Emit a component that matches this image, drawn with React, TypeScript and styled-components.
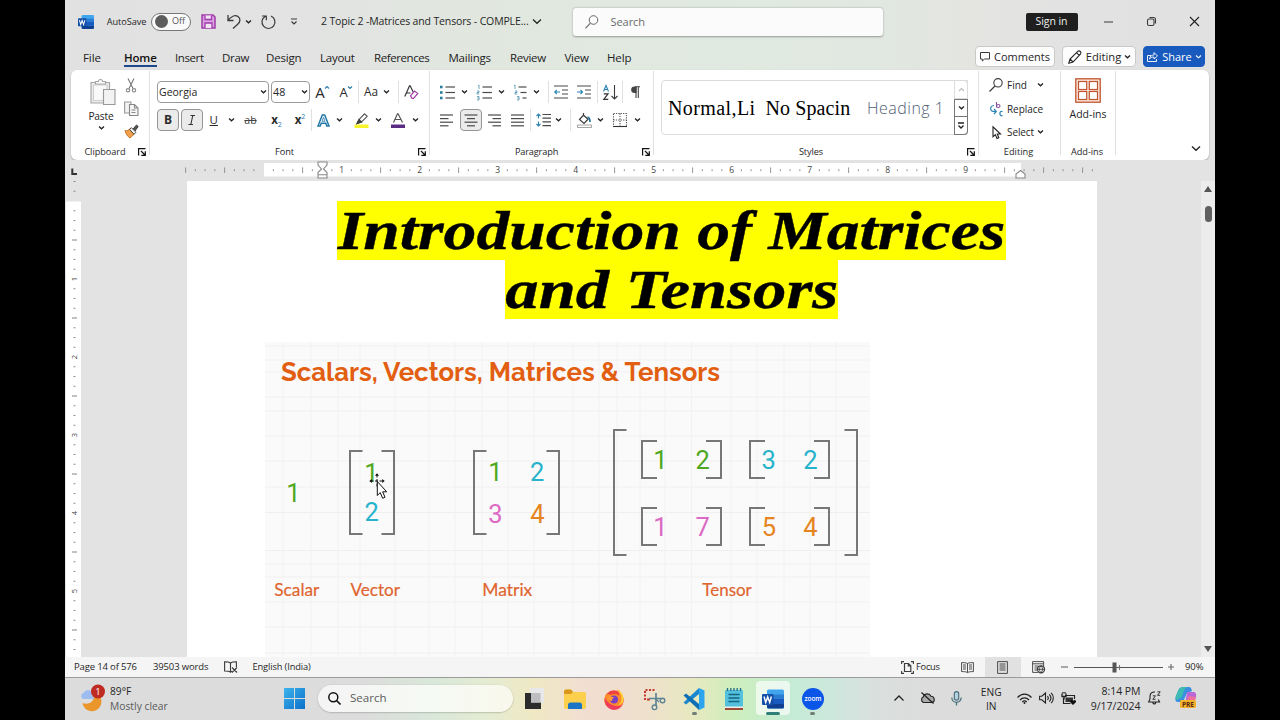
import React from "react";
import styled, { createGlobalStyle, css } from "styled-components";

const Global = createGlobalStyle`
  * { box-sizing: border-box; }
  body { margin: 0; background: #000; overflow: hidden; }
`;

/* ---------- shared parts ---------- */

const Screen = styled.div`
  width: 1280px;
  height: 720px;
  padding: 0 65px;
  background: #000;
  font-family: "Open Sans", "Noto Sans", sans-serif;
  color: #262626;
`;

const Desktop = styled.div`
  display: flex;
  flex-direction: column;
  width: 1150px;
  height: 720px;
  overflow: hidden;
  background: #e3e3e3;
`;

const Label = styled.span<{ $size?: number; $track?: number; $color?: string; $weight?: number }>`
  font-size: ${(p) => p.$size ?? 10}px;
  letter-spacing: ${(p) => p.$track ?? 0}px;
  color: ${(p) => p.$color ?? "#262626"};
  font-weight: ${(p) => p.$weight ?? 400};
  line-height: 1.2;
  white-space: nowrap;
`;

const Slot = styled.div<{ $w: number; $ml?: number }>`
  display: flex;
  flex: none;
  align-items: center;
  justify-content: center;
  width: ${(p) => p.$w}px;
  margin-left: ${(p) => p.$ml ?? 0}px;
`;

const Svg = styled.svg`
  display: block;
  flex: none;
  overflow: visible;
  fill: none;
  stroke: #3b3b3b;
  stroke-width: 1.1;
`;

const Glyph = ({ w, h, children }: { w: number; h: number; children: React.ReactNode }) => (
  <Svg width={w} height={h} viewBox={`0 0 ${w} ${h}`}>
    {children}
  </Svg>
);

const Chevron = ({ w = 5, color = "#222", weight = 1.3 }: { w?: number; color?: string; weight?: number }) => (
  <Svg width={w} height={w / 2 + 1} viewBox={`0 0 ${w} ${w / 2 + 1}`}>
    <path d={`M0 .5 L${w / 2} ${w / 2 + 0.3} L${w} .5`} stroke={color} strokeWidth={weight} />
  </Svg>
);

const Drop = ({ ml }: { ml: number }) => (
  <Slot $w={8} $ml={ml}>
    <Chevron />
  </Slot>
);

/* ---------- header ---------- */

const Header = styled.header`
  flex: none;
  height: 70px;
  background: linear-gradient(90deg, #e1e1e1 0, #e2e3e2 240px, #e1e7df 420px, #e0eae1 700px, #e1e6e1 840px, #e4e5e1 900px, #e2e2e2 1000px, #e1e1e1 100%);
`;

const TitleBar = styled.div`
  display: flex;
  align-items: center;
  height: 43px;
  padding-left: 13px;
`;

const Toggle = styled.div`
  display: flex;
  align-items: center;
  gap: 4px;
  width: 40px;
  height: 18px;
  margin-left: 4.5px;
  padding-left: 3px;
  border: 1px solid #777;
  border-radius: 9px;
  background: #fafafa;
`;

const Knob = styled.div`
  width: 13px;
  height: 13px;
  border-radius: 50%;
  background: #5d5d5d;
`;

const TitleText = styled.div`
  display: flex;
  align-items: center;
  width: 212px;
  margin-left: 22px;
`;

const SearchBox = styled.div`
  display: flex;
  align-items: center;
  gap: 12px;
  width: 310px;
  height: 28px;
  margin-left: 31.5px;
  padding-left: 12px;
  border-radius: 3px;
  background: #fafbfa;
  box-shadow: 0 0.5px 2px rgba(0, 0, 0, 0.35);
`;

const SignIn = styled.div`
  display: flex;
  align-items: center;
  justify-content: center;
  width: 52px;
  height: 18px;
  margin-left: 143px;
  border-radius: 2px;
  background: #1f1f1f;
`;

const TabBar = styled.nav`
  display: flex;
  align-items: flex-start;
  height: 27px;
  padding-left: 18px;
`;

const Tab = styled.div<{ $w: number }>`
  width: ${(p) => p.$w}px;
  padding-top: 8px;
  line-height: 0;
`;

const TabName = styled.span<{ $active?: boolean; $track: number }>`
  display: inline-block;
  height: 16px;
  font-size: 11.5px;
  line-height: 14px;
  letter-spacing: ${(p) => p.$track}px;
  color: #222;
  ${(p) => p.$active && css`
    height: 16px;
    font-weight: 600;
    color: #111;
    border-bottom: 2px solid #1c4a8c;
  `}
`;

const Actions = styled.div`
  display: flex;
  gap: 7px;
  margin: 3px 10px 0 auto;
`;

const Action = styled.div<{ $w: number; $primary?: boolean }>`
  display: flex;
  align-items: center;
  justify-content: center;
  gap: 4px;
  width: ${(p) => p.$w}px;
  height: 21px;
  border: 1px solid ${(p) => (p.$primary ? "#185abd" : "#c9c9c9")};
  border-radius: 4px;
  background: ${(p) => (p.$primary ? "#185abd" : "#fdfdfd")};
`;

const tabs: [string, number, number][] = [
  ["File", 41, -0.1], ["Home", 51, -0.15], ["Insert", 47, -0.4], ["Draw", 44, -0.3], ["Design", 54, -0.2],
  ["Layout", 54, -0.25], ["References", 74.5, -0.42], ["Mailings", 61.5, -0.25], ["Review", 54.5, -0.3],
  ["View", 42.5, -0.25], ["Help", 40, -0.15],
];

const WordLogo = ({ size }: { size: number }) => (
  <Svg width={size} height={size} viewBox="0 0 22 21" stroke="none">
    <g stroke="none">
      <rect x="5" y="1" width="17" height="19" rx="1.5" fill="#41a5ee" />
      <rect x="5" y="6" width="17" height="5" fill="#2b7cd3" />
      <rect x="5" y="10.5" width="17" height="5" fill="#185abd" />
      <path d="M5 15.5h17V18.5a1.5 1.5 0 0 1-1.5 1.5h-14A1.5 1.5 0 0 1 5 18.5Z" fill="#103f91" />
      <rect x="0" y="5.5" width="11.5" height="11" rx="1" fill="#1450a8" />
    </g>
    <path d="M2 8l1.7 6L5.7 8.4 7.7 14 9.4 8" stroke="#fff" strokeWidth="1.4" />
  </Svg>
);

const TopHeader = () => (
  <Header>
    <TitleBar>
      <Slot $w={15}><WordLogo size={16} /></Slot>
      <Slot $w={40} $ml={13.5}><Label $size={9.2} $track={-0.05}>AutoSave</Label></Slot>
      <Toggle><Knob /><Label $size={9} $color="#555">Off</Label></Toggle>
      <Slot $w={15} $ml={10}>
        <Glyph w={15} h={15}>
          <path d="M1 1h11l2 2v11H1Z" fill="#d9a3e0" stroke="#a03bab" strokeWidth="1.5" />
          <path d="M4 1.5v4h6.5v-4M4 14V9h7v5" fill="#f3e3f5" stroke="#a03bab" strokeWidth="1.3" />
        </Glyph>
      </Slot>
      <Slot $w={16} $ml={10}>
        <Glyph w={14} h={15}>
          <path d="M1 1v5.5h5.5M1 6.5C4 2.500 8 .5 11 2.500c3 2.200 2.200 5.500-.3 7.700L6 14.5" strokeWidth="1.3" />
        </Glyph>
      </Slot>
      <Drop ml={2} />
      <Slot $w={16} $ml={8}>
        <Glyph w={15} h={15}>
          <path d="M10 2a6.5 6.5 0 1 1-5.5.2M1 2h4.3v4.3" strokeWidth="1.2" />
        </Glyph>
      </Slot>
      <Slot $w={10} $ml={13}>
        <Glyph w={6} h={7}><path d="M0 1h6M.5 3.5L3 6l2.500-2.500" strokeWidth="1.2" /></Glyph>
      </Slot>
      <TitleText><Label $size={10.5} $track={-0.14}>2 Topic 2 -Matrices and Tensors - COMPLE...</Label></TitleText>
      <Chevron w={8} weight={1.2} />
      <SearchBox>
        <Glyph w={14} h={14}>
          <circle cx="8.5" cy="5" r="4.3" stroke="#666" strokeWidth="1" />
          <path d="M5.4 8.2L.5 13.3" stroke="#666" strokeWidth="1.1" />
        </Glyph>
        <Label $size={11} $track={-0.05} $color="#6b6b6b">Search</Label>
      </SearchBox>
      <SignIn><Label $size={10.5} $track={-0.05} $color="#eee">Sign in</Label></SignIn>
      <Slot $w={10} $ml={25.5}><Glyph w={9} h={2}><path d="M0 1h9" strokeWidth="1" /></Glyph></Slot>
      <Slot $w={10} $ml={33}>
        <Glyph w={9} h={9}>
          <rect x=".5" y="2" width="6.5" height="6.5" rx="1.5" />
          <path d="M2.5 .5h4a2 2 0 0 1 2 2v4" />
        </Glyph>
      </Slot>
      <Slot $w={10} $ml={33}><Glyph w={9} h={9}><path d="M0 0l9 9M9 0L0 9" stroke="#222" /></Glyph></Slot>
    </TitleBar>
    <TabBar>
      {tabs.map(([name, w, track]) => (
        <Tab key={name} $w={w}><TabName $active={name === "Home"} $track={track}>{name}</TabName></Tab>
      ))}
      <Actions>
        <Action $w={80}>
          <Glyph w={10} h={9}><path d="M.5 .5h9v6.5H4.5L2.3 9V7H.5Z" strokeWidth="1" /></Glyph>
          <Label $size={11} $track={-0.02}>Comments</Label>
        </Action>
        <Action $w={74}>
          <Glyph w={14} h={14}><path d="M.8 13.2L2 9 10 1.2c1.600-1 3.700.9 2.600 2.600L5 12ZM8.5 2.700l2.700 2.700M2 9l3 3" stroke="#222" /></Glyph>
          <Label $size={11.2}>Editing</Label>
          <Chevron />
        </Action>
        <Action $w={62} $primary>
          <Glyph w={11} h={11}><path d="M4 4.500H.5V10.500H9.500V8M2.500 8C3 5 5 4 7 4V1.500L10.500 5 7 8V6C5 6 4 6.500 2.500 8Z" stroke="#fff" strokeWidth=".9" /></Glyph>
          <Label $size={11} $color="#fff">Share</Label>
          <Chevron color="#fff" weight={1.1} />
        </Action>
      </Actions>
    </TabBar>
  </Header>
);

/* ---------- ribbon ---------- */

const Ribbon = styled.section`
  display: flex;
  flex: none;
  height: 90px;
  margin: 0 6px;
  padding-top: 1px;
  border-radius: 6px;
  background: #fff;
  box-shadow: 0 1px 2px rgba(0, 0, 0, 0.28);
`;

const Group = styled.div<{ $w: number }>`
  display: flex;
  flex: none;
  flex-direction: column;
  width: ${(p) => p.$w}px;
  height: 84px;
  border-right: 1px solid #e0e0e0;
`;

const GroupBody = styled.div`
  display: flex;
  flex: none;
  height: 71px;
`;

const Tools = styled.div<{ $pad: number }>`
  display: flex;
  flex-direction: column;
  gap: 6px;
  padding: 10px 0 0 ${(p) => p.$pad}px;
`;

const ToolRow = styled.div`
  display: flex;
  align-items: center;
  height: 22px;
`;

const GroupFooter = styled.div`
  display: flex;
  flex: none;
  align-items: center;
  height: 19px;
  padding: 0 3px 0 1px;
`;

const GroupName = styled.div`
  display: flex;
  flex: 1;
  align-items: center;
  justify-content: center;
`;

const Divider = styled.div<{ $ml: number }>`
  flex: none;
  width: 1px;
  height: 22px;
  margin-left: ${(p) => p.$ml}px;
  background: #e0e0e0;
`;

const Combo = styled.div<{ $w: number; $ml?: number }>`
  display: flex;
  flex: none;
  align-items: center;
  justify-content: space-between;
  width: ${(p) => p.$w}px;
  height: 22px;
  margin-left: ${(p) => p.$ml ?? 0}px;
  padding: 0 2px 0 1px;
  border: 1px solid #9a9a9a;
  border-radius: 4px;
`;

const Pressed = styled.div<{ $ml?: number }>`
  display: flex;
  flex: none;
  align-items: center;
  justify-content: center;
  width: 22px;
  height: 22px;
  margin-left: ${(p) => p.$ml ?? 0}px;
  border: 1px solid #959595;
  border-radius: 4px;
  background: #ebebeb;
`;

const FontGlyph = styled.span<{ $size: number; $bold?: boolean; $line?: string; $color?: string }>`
  font-size: ${(p) => p.$size}px;
  line-height: 1;
  font-weight: ${(p) => (p.$bold ? 700 : 400)};
  text-decoration: ${(p) => p.$line ?? "none"};
  color: ${(p) => p.$color ?? "#2b2b2b"};
`;

const Script = styled.span<{ $up?: boolean }>`
  font-size: 7px;
  line-height: 1;
  color: #2b7ca8;
  align-self: ${(p) => (p.$up ? "flex-start" : "flex-end")};
  margin-bottom: ${(p) => (p.$up ? 7 : 0)}px;
  margin-top: ${(p) => (p.$up ? 0 : 8)}px;
`;

const Launcher = () => (
  <Glyph w={8} h={8}>
    <path d="M.6 7.5V.6H7.5M3 3l4 4M7.3 3.3v4H3.3" stroke="#111" strokeWidth="1.2" />
  </Glyph>
);

const lineColor = "#4a4a4a";
const Lines = ({ rows }: { rows: [number, number][] }) => (
  <Glyph w={14} h={13}>
    {rows.map(([a, b], i) => <path key={i} d={`M${a} ${1 + i * 3.6}H${b}`} stroke={lineColor} strokeWidth="1.2" />)}
  </Glyph>
);

const ListGlyph = ({ kind }: { kind: "bullet" | "number" | "multi" }) => (
  <Glyph w={15} h={15}>
    {[2, 7.5, 13].map((y, i) => {
      const indent = kind === "multi" ? i * 2 : 0;
      return (
        <g key={y}>
          <path d={`M${5.5 + indent} ${y}H${kind === "multi" ? 13.5 : 15}`} stroke={lineColor} strokeWidth="1.2" />
          {kind === "bullet"
            ? <rect x="0" y={y - 1.3} width="2.6" height="2.6" fill="#2a7f9e" stroke="none" />
            : <path d={i === 0 ? "M1 .5L2 0V4" : i === 1 ? `M${indent} 6h2v1.5h-2v1.5h2.2` : `M${indent} 11.5h2v3.5h-2M${indent + .3} 13.2h1.7`} stroke="#4a8fae" strokeWidth=".8" />}
        </g>
      );
    })}
  </Glyph>
);

const IndentGlyph = ({ right }: { right?: boolean }) => (
  <Glyph w={14} h={14}>
    <path d="M0 1H14M8 5H14M8 9H14M0 13H14" stroke={lineColor} strokeWidth="1.2" />
    <path d={right ? "M0 7H5.5M3.5 5l2 2-2 2" : "M6 7H.8M2.8 5l-2 2 2 2"} stroke="#2b83b5" strokeWidth="1.1" />
  </Glyph>
);

const ClipboardTools = styled.div`
  display: flex;
  padding: 7px 0 0 16px;
`;

const PasteTool = styled.div`
  display: flex;
  flex-direction: column;
  align-items: center;
  width: 28px;
  gap: 4.5px;
`;

const ClipColumn = styled.div`
  display: flex;
  flex-direction: column;
  align-items: center;
  gap: 8px;
  width: 18px;
  margin-left: 7px;
`;

const ClipboardGroup = () => (
  <Group $w={79}>
    <GroupBody>
      <ClipboardTools>
        <PasteTool>
          <Glyph w={25} h={27}>
            <path d="M2 4.500h18.500V25H2Z" fill="#ececec" stroke="#a3a3a3" />
            <path d="M4.500 7h13.500v15.500H4.500Z" fill="#f9f9f9" stroke="#cfcfcf" />
            <path d="M6.500 6V3.500h3a2 2 0 0 1 4 0h3V6Z" fill="#fff" stroke="#a3a3a3" />
            <path d="M14.500 11.500H26V26.500H14.500Z" fill="#f3f3f3" stroke="#999" />
          </Glyph>
          <Label $size={10.2} $track={-0.15}>Paste</Label>
          <Chevron />
        </PasteTool>
        <ClipColumn>
          <Glyph w={10} h={15}>
            <path d="M2 .5l5 10M8 .5l-5 10" stroke="#777" />
            <circle cx="2" cy="12.3" r="1.7" stroke="#888" /><circle cx="8" cy="12.3" r="1.7" stroke="#888" />
          </Glyph>
          <Glyph w={15} h={15}>
            <path d="M5 12H.6V1H7v2" stroke="#999" fill="#f3f3f3" />
            <path d="M5.500 3.500h5l3.500 3.500v7.500H5.500ZM10.500 3.500V7H14M7.500 9h4M7.500 11.500h4" stroke="#888" fill="#f6f6f6" />
          </Glyph>
          <Glyph w={15} h={15}>
            <path d="M1 6.500c2 1 3-.5 4.500-1.200l4.500 5c-1.500 1-2 2.200-4 3.700C3.500 12.500 1.500 9.500 1 6.500Z" fill="#f0a04b" stroke="#c06a1c" strokeWidth=".9" />
            <path d="M5.500 5.200l2-1.500 4.300 4.600-1.800 2Z" fill="#fff" stroke="#333" strokeWidth=".9" />
            <path d="M9 5L12.500 1l1.700 1.500L11 7" stroke="#333" fill="#555" strokeWidth=".9" />
          </Glyph>
        </ClipColumn>
      </ClipboardTools>
    </GroupBody>
    <GroupFooter><GroupName><Label $size={9.2} $track={-0.05}>Clipboard</Label></GroupName><Launcher /></GroupFooter>
  </Group>
);

const FontGroup = () => (
  <Group $w={280}>
    <GroupBody>
      <Tools $pad={7}>
        <ToolRow>
          <Combo $w={112}><Label $size={10.5}>Georgia</Label><Chevron /></Combo>
          <Combo $w={38.5} $ml={2}><Label $size={10.8}>48</Label><Chevron /></Combo>
          <Slot $w={25}><FontGlyph $size={15}>A</FontGlyph><Glyph w={4} h={12}><path d="M0 2.5L2 .5l2 2" stroke="#2b7ca8" /></Glyph></Slot>
          <Slot $w={22}><FontGlyph $size={13}>A</FontGlyph><Glyph w={4} h={12}><path d="M0 .5L2 2.5l2-2" stroke="#2b7ca8" /></Glyph></Slot>
          <Divider $ml={1} />
          <Slot $w={15} $ml={5}><FontGlyph $size={11.8}>Aa</FontGlyph></Slot>
          <Drop ml={4} />
          <Divider $ml={7} />
          <Slot $w={24} $ml={1}>
            <Glyph w={15} h={14}>
              <path d="M.8 11.5L5.500.8h.6L9.500 7.500M2.500 8h4" stroke="#333" strokeWidth="1.2" />
              <path d="M6.500 10.800L10.500 6l3.300 2.500L9.500 13.300H8Z" fill="#fff" stroke="#a33fa8" strokeWidth="1.2" />
            </Glyph>
          </Slot>
        </ToolRow>
        <ToolRow>
          <Pressed><FontGlyph $size={12} $bold>B</FontGlyph></Pressed>
          <Pressed $ml={1.5}><Glyph w={8} h={10}><path d="M2.5 .5H7M.5 9.5H5M4.8 .5L2.8 9.5" stroke="#333" /></Glyph></Pressed>
          <Slot $w={22.5}><FontGlyph $size={11.5} $line="underline">U</FontGlyph></Slot>
          <Drop ml={2.5} />
          <Slot $w={22} $ml={4}><FontGlyph $size={10.5} $line="line-through" $color="#444">ab</FontGlyph></Slot>
          <Slot $w={24} $ml={3}><FontGlyph $size={11.5} $bold>x</FontGlyph><Script>2</Script></Slot>
          <Slot $w={20} $ml={1.5}><FontGlyph $size={11.5} $bold>x</FontGlyph><Script $up>2</Script></Slot>
          <Divider $ml={1} />
          <Slot $w={22} $ml={0.5}>
            <Glyph w={13} h={13}>
              <path d="M1 12L5.300 1h2.400L12 12H9.800L8.800 9.200H4.200L3.200 12Z" fill="#fff" stroke="#2479a8" strokeWidth="1.5" />
              <path d="M5 7.300L6.500 3.300 8 7.300Z" fill="#fff" stroke="#2479a8" strokeWidth=".8" />
            </Glyph>
          </Slot>
          <Drop ml={1} />
          <Slot $w={22} $ml={7}>
            <Glyph w={15} h={15}>
              <path d="M.5 11.5h14V15H.5Z" fill="#f7f52a" stroke="none" />
              <path d="M3 10.500L5 6.500 10.500 .8l2.700 2.500L7.500 9Z" fill="#fff" stroke="#555" /><path d="M3 10.500l2-4L7.500 9Z" fill="#444" />
            </Glyph>
          </Slot>
          <Drop ml={2} />
          <Slot $w={24} $ml={3.5}>
            <Glyph w={14} h={15}>
              <path d="M2.500 9.500L6.500 .8h.6L11.500 9.500M4 6.500h6" stroke="#555" strokeWidth="1.2" />
              <path d="M0 11.5h14V15H0Z" fill="#5b2c83" stroke="none" />
            </Glyph>
          </Slot>
          <Drop ml={1} />
        </ToolRow>
      </Tools>
    </GroupBody>
    <GroupFooter><GroupName><Label $size={9.2}>Font</Label></GroupName><Launcher /></GroupFooter>
  </Group>
);

const ParagraphGroup = () => (
  <Group $w={224}>
    <GroupBody>
      <Tools $pad={9}>
        <ToolRow>
          <Slot $w={16}><ListGlyph kind="bullet" /></Slot>
          <Drop ml={5} />
          <Slot $w={16} $ml={8}><ListGlyph kind="number" /></Slot>
          <Drop ml={5} />
          <Slot $w={17} $ml={7}><ListGlyph kind="multi" /></Slot>
          <Drop ml={3} />
          <Divider $ml={8} />
          <Slot $w={16} $ml={3.5}><IndentGlyph /></Slot>
          <Slot $w={16} $ml={7.5}><IndentGlyph right /></Slot>
          <Divider $ml={5} />
          <Slot $w={16} $ml={4}>
            <Glyph w={15} h={15}>
              <path d="M.5 6.500L3 .5l2.500 6M1.400 4.500h3.200" stroke="#2b83b5" strokeWidth="1.1" />
              <path d="M.8 8.800H5L.8 14.300H5.300" stroke="#333" strokeWidth="1.2" />
              <path d="M11.500 0V14M8.500 11l3 3 3-3" />
            </Glyph>
          </Slot>
          <Divider $ml={4} />
          <Slot $w={16} $ml={4}>
            <Glyph w={9} h={12}>
              <path d="M5 1H3.500a2.700 2.700 0 0 0 0 5.500H5Z" fill="#444" stroke="#444" />
              <path d="M5 1V12M7.300 1V12M4 .8H9" stroke="#444" />
            </Glyph>
          </Slot>
        </ToolRow>
        <ToolRow>
          <Slot $w={16}><Lines rows={[[0, 13], [0, 8.5], [0, 13], [0, 8.5]]} /></Slot>
          <Pressed $ml={5}><Lines rows={[[.5, 13.5], [3, 11], [.5, 13.5], [3, 11]]} /></Pressed>
          <Slot $w={16} $ml={4.5}><Lines rows={[[0, 13], [4.5, 13], [0, 13], [4.5, 13]]} /></Slot>
          <Slot $w={16} $ml={7}><Lines rows={[[0, 13], [0, 13], [0, 13], [0, 13]]} /></Slot>
          <Divider $ml={4.5} />
          <Slot $w={16} $ml={4.5}>
            <Glyph w={15} h={14}>
              <path d="M6.500 1.500H15M6.500 5.200H15M6.500 8.900H15M6.500 12.600H15" stroke={lineColor} strokeWidth="1.2" />
              <path d="M2.500 1V5.500M.5 3l2-2 2 2M2.500 8.500V13M.5 11l2 2 2-2" stroke="#2b83b5" />
            </Glyph>
          </Slot>
          <Drop ml={3} />
          <Divider $ml={7.5} />
          <Slot $w={16} $ml={5}>
            <Glyph w={15} h={15}>
              <path d="M2.500 6.500L6.500 2.200l4.500 4L7 10.500ZM6.500 2.200V0" strokeWidth="1.2" />
              <path d="M10.500 4c2 .5 2.500 2 2.500 5" stroke="#1f6fa0" strokeWidth="1.7" />
              <path d="M.5 12h14v2.500H.5Z" stroke="#999" fill="#fff" strokeWidth=".9" />
            </Glyph>
          </Slot>
          <Drop ml={4.5} />
          <Slot $w={16} $ml={7}>
            <Glyph w={14} h={14}>
              <path d="M.5 .5h13v13H.5ZM7 .5v13M.5 7h13" strokeDasharray="1.2 1.2" stroke="#555" />
              <path d="M0 13.5h14" stroke="#333" />
            </Glyph>
          </Slot>
          <Drop ml={5.5} />
        </ToolRow>
      </Tools>
    </GroupBody>
    <GroupFooter><GroupName><Label $size={9.2} $track={-0.15}>Paragraph</Label></GroupName><Launcher /></GroupFooter>
  </Group>
);

const Gallery = styled.div`
  display: flex;
  width: 307px;
  height: 55px;
  margin: 9px 0 0 7px;
  border: 1px solid #dcdcdc;
  border-radius: 4px;
`;

const StyleSample = styled.div<{ $w: number; $track: number; $sans?: boolean }>`
  width: ${(p) => p.$w}px;
  padding-left: 6px;
  font-family: ${(p) => (p.$sans ? '"Open Sans", sans-serif' : '"Liberation Serif", serif')};
  font-size: ${(p) => (p.$sans ? 16 : 20)}px;
  font-weight: ${(p) => (p.$sans ? 300 : 400)};
  letter-spacing: ${(p) => p.$track}px;
  color: ${(p) => (p.$sans ? "#4f6077" : "#000")};
  line-height: 55px;
  white-space: nowrap;
`;

const GalleryScroll = styled.div`
  display: flex;
  flex-direction: column;
  width: 14px;
  margin: -1px -1px -1px auto;
`;

const ScrollCell = styled.div<{ $dim?: boolean }>`
  display: flex;
  flex: 1;
  align-items: center;
  justify-content: center;
  border: 1px solid ${(p) => (p.$dim ? "#dcdcdc" : "#777")};
  &:last-child { border-radius: 0 0 4px 0; border-top: 0; }
`;

const StylesGroup = () => (
  <Group $w={325}>
    <GroupBody>
      <Gallery>
        <StyleSample $w={97.5} $track={0.4}>Normal,Li</StyleSample>
        <StyleSample $w={101.5} $track={0.1}>No Spacin</StyleSample>
        <StyleSample $w={90} $track={0.5} $sans>Heading 1</StyleSample>
        <GalleryScroll>
          <ScrollCell $dim><Svg width="5" height="3"><path d="M0 3L2.5 .5 5 3" stroke="#bbb" /></Svg></ScrollCell>
          <ScrollCell><Chevron /></ScrollCell>
          <ScrollCell><Glyph w={6} h={7}><path d="M0 1h6M.5 3.5L3 6l2.500-2.500" stroke="#222" strokeWidth="1.3" /></Glyph></ScrollCell>
        </GalleryScroll>
      </Gallery>
    </GroupBody>
    <GroupFooter><GroupName><Label $size={9.2} $track={-0.1}>Styles</Label></GroupName><Launcher /></GroupFooter>
  </Group>
);

const EditList = styled.div`
  display: flex;
  flex-direction: column;
  gap: 7.5px;
  padding: 6px 0 0 8px;
`;

const EditItem = styled.div`
  display: flex;
  align-items: center;
  height: 16px;
`;

const EditText = styled.div<{ $w: number }>`
  display: flex;
  align-items: center;
  width: ${(p) => p.$w}px;
  margin-left: 2px;
`;

const EditingGroup = () => (
  <Group $w={82}>
    <GroupBody>
      <EditList>
        <EditItem>
          <Slot $w={18}><Glyph w={14} h={14}><circle cx="9" cy="4.8" r="4.2" /><path d="M6 8L.5 13.5" strokeWidth="1.2" /></Glyph></Slot>
          <EditText $w={31}><Label $size={10}>Find</Label></EditText><Chevron />
        </EditItem>
        <EditItem>
          <Slot $w={18}>
            <Glyph w={13} h={14}>
              <path d="M6.500 0v5.500M6.500 4c0-2 3.500-2 3.500 0s-3.500 2-3.500 0" stroke="#8a4fa0" />
              <path d="M4 3.500C-.5 4-.5 9.500 4.500 9.500H6M4 7l2.300 2.500L4 12" stroke="#2b83b5" strokeWidth="1.2" />
              <path d="M12.500 9.500c-3.500-1.200-3.500 5.200 0 4" stroke="#2b83b5" strokeWidth="1.2" />
            </Glyph>
          </Slot>
          <EditText $w={40}><Label $size={10} $track={-0.05}>Replace</Label></EditText>
        </EditItem>
        <EditItem>
          <Slot $w={18}><Glyph w={9} h={13}><path d="M1 .8V10.800L3.300 8.600 5 12.500l1.800-.8L5.300 8H8.500Z" stroke="#222" /></Glyph></Slot>
          <EditText $w={31}><Label $size={10} $track={-0.1}>Select</Label></EditText><Chevron />
        </EditItem>
      </EditList>
    </GroupBody>
    <GroupFooter><GroupName><Label $size={9.2}>Editing</Label></GroupName></GroupFooter>
  </Group>
);

const AddInsTool = styled.div`
  display: flex;
  flex: 1;
  flex-direction: column;
  align-items: center;
  gap: 5px;
  padding-top: 7px;
`;

const Spacer = styled.div`
  flex: 1;
`;

const CollapseCorner = styled.div`
  display: flex;
  flex: 1;
  align-items: flex-end;
  justify-content: flex-end;
  padding: 0 9px 9px 0;
`;

const AddInsGroup = () => (
  <Group $w={55}>
    <GroupBody>
      <AddInsTool>
        <Glyph w={26} h={25}>
          <rect x=".8" y=".8" width="24.4" height="23.4" fill="#fbe6dc" stroke="#c0542e" strokeWidth="1.3" />
          {[[3.5, 3.5], [14.3, 3.5], [3.5, 13.5], [14.3, 13.5]].map(([x, y]) => (
            <rect key={`${x}-${y}`} x={x} y={y} width="8.2" height="8" fill="#fff" stroke="#c0542e" strokeWidth="1.2" />
          ))}
        </Glyph>
        <Label $size={10.5}>Add-ins</Label>
      </AddInsTool>
    </GroupBody>
    <GroupFooter><GroupName><Label $size={9.2} $track={-0.05}>Add-ins</Label></GroupName></GroupFooter>
  </Group>
);

/* ---------- rulers ---------- */

const RulerStrip = styled.div`
  flex: none;
  height: 21px;
  background: #e3e3e3;
`;

const UNIT = 78;
const HorizontalRuler = () => {
  const zero = 198.6;
  const ticks = [];
  for (let i = -8; i <= 85; i++) {
    const x = zero + (i * UNIT) / 8;
    if (i % 8 === 0 && i > 0 && i < 80) {
      ticks.push(<text key={i} x={x} y="13.2" textAnchor="middle" fontSize="8.5" fill="#444" stroke="none">{i / 8}</text>);
    } else if (i !== 0) {
      const h = i % 4 === 0 ? 2.8 : 1;
      ticks.push(<path key={i} d={`M${x} ${10.2 - h}V${10.2 + h}`} stroke="#8a8a8a" strokeWidth=".9" />);
    }
  }
  return (
    <RulerStrip>
      <Svg width="1150" height="21" viewBox="0 0 1150 21">
        <rect x="199" y="3" width="757" height="13.5" fill="#fff" stroke="none" />
        <path d="M7.300 8.500V14H12" stroke="#333" strokeWidth="2" />
        {ticks}
        <path d="M253 2h9v3L258.500 9 262 12.500v5.500h-9V12.500L256.500 9 253 5ZM253 14.800h9" fill="#fff" stroke="#888" />
        <path d="M951 18v-4l4.500-3.500 4.500 3.500v4Z" fill="#fff" stroke="#888" />
      </Svg>
    </RulerStrip>
  );
};

const VerticalRuler = () => {
  const zero = 20;
  const ticks = [];
  for (let i = -2; i <= 46; i++) {
    const y = zero + (i * UNIT) / 8;
    if (i % 8 === 0 && i > 0) {
      ticks.push(<text key={i} transform={`translate(12 ${y}) rotate(-90)`} textAnchor="middle" fontSize="7.5" fill="#444" stroke="none">{i / 8}</text>);
    } else if (i !== 0) {
      const h = i % 4 === 0 ? 2.5 : 0.9;
      ticks.push(<path key={i} d={`M${9.5 - h} ${y}H${9.5 + h}`} stroke="#777" strokeWidth=".9" />);
    }
  }
  return (
    <Svg width="122" height="476" viewBox="0 0 122 476">
      <rect x="1" y="20.5" width="15" height="455.5" fill="#fff" stroke="none" />
      {ticks}
    </Svg>
  );
};

/* ---------- document ---------- */

const Workspace = styled.main`
  display: flex;
  flex: none;
  height: 476px;
  overflow: hidden;
`;

const Page = styled.article`
  width: 910px;
  height: 476px;
  padding-top: 20px;
  background: #fff;
`;

const Heading = styled.h1`
  display: flex;
  flex-direction: column;
  align-items: center;
  margin: 0;
  padding-left: 59px;
  font-family: "Liberation Serif", serif;
  font-size: 54px;
  font-weight: 700;
  font-style: italic;
  color: #000;
  -webkit-text-stroke: 0.4px #000;
`;

const Marked = styled.span<{ $w: number }>`
  display: flex;
  justify-content: center;
  width: ${(p) => p.$w}px;
  height: 59px;
  line-height: 61px;
  background: #ff0;
  white-space: nowrap;
`;

const Stretch = styled.span<{ $x: number }>`
  display: block;
  transform: scaleX(${(p) => p.$x});
`;

const Figure = styled.figure`
  margin: 24px 0 0 77px;
`;

const Bracket = ({ l, r, t, b, s }: { l: number; r: number; t: number; b: number; s: number }) => (
  <path d={`M${l + s} ${t}H${l}V${b}H${l + s}M${r - s} ${t}H${r}V${b}H${r - s}`} stroke="#777" strokeWidth="2" />
);

const green = "#4fa81f";
const cyan = "#27b3cc";
const pink = "#dc69c4";
const orange = "#e58420";

const numerals: [string, number, number, string][] = [
  ["1", 293.5, 501.5, green],
  ["1", 371.5, 482, green], ["2", 371.7, 520.8, cyan],
  ["1", 495.5, 481, green], ["2", 537.2, 481, cyan], ["3", 495.3, 522.8, pink], ["4", 537.3, 522.8, orange],
  ["1", 660.5, 469, green], ["2", 702.7, 469, green], ["3", 768.6, 469, cyan], ["2", 810.3, 469, cyan],
  ["1", 660.5, 535.8, pink], ["7", 702.7, 535.8, pink], ["5", 769, 535.8, orange], ["4", 810.5, 535.8, orange],
];

const captions: [string, number, number][] = [
  ["Scalar", 274.3, 45], ["Vector", 350.5, 49.5], ["Matrix", 482.3, 50], ["Tensor", 702.3, 49.5],
];

const gridRows = [346, 360, 372, 397, 411, 436, 461, 487, 512.5, 550.5, 564, 577, 602, 627, 653];
const gridCols = [283, 311, 338, 360, 395, 429, 455, 482, 508, 534, 573, 599, 617, 640, 665, 691.5, 731, 757, 784, 810, 835.7];

const MatrixFigure = () => (
  <Figure>
    <Svg width="606" height="314" viewBox="264 343 606 314">
      <rect x="265" y="342" width="605" height="315" fill="#fafafa" stroke="none" />
      {gridRows.map((y) => <path key={y} d={`M265 ${y}H870`} stroke="#efefef" />)}
      {gridCols.map((x) => <path key={x} d={`M${x} 342V657`} stroke="#f2f2f2" />)}
      <text x="281" y="380.5" textLength="439" lengthAdjust="spacingAndGlyphs" fontFamily="Raleway, Lato, sans-serif" fontWeight="700" fontSize="26" fill="#e25f12" stroke="none">
        Scalars, Vectors, Matrices &amp; Tensors
      </text>
      <Bracket l={350} r={394} t={451} b={534} s={12.5} />
      <Bracket l={474} r={559} t={451} b={534} s={12.5} />
      <Bracket l={614} r={857} t={430} b={555} s={12.5} />
      <Bracket l={642} r={721} t={441} b={478} s={15} />
      <Bracket l={750} r={829} t={441} b={478} s={15} />
      <Bracket l={642} r={721} t={508} b={545} s={15} />
      <Bracket l={750} r={829} t={508} b={545} s={15} />
      {numerals.map(([d, x, y, c], i) => (
        <text key={i} x={x} y={y} textAnchor="middle" fontFamily="Roboto, sans-serif" fontSize="25.5" fill={c} stroke="none">{d}</text>
      ))}
      {captions.map(([t, x, w]) => (
        <text key={t} x={x} y="596.3" textLength={w} lengthAdjust="spacingAndGlyphs" fontFamily="Lato, sans-serif" fontSize="17" fill="#df6530" stroke="#df6530" strokeWidth=".2">{t}</text>
      ))}
      <g stroke="#111" strokeWidth="1">
        <path d="M377 474.500V488M370.500 481H383.500" strokeDasharray="3 1.5" />
        <path d="M377 473.300l-2 2.500h4ZM369.300 481l2.500-2v4ZM384.700 481l-2.500-2v4Z" fill="#111" stroke="none" />
        <path d="M377.300 481.500V495.500L380.200 492.600 382.700 498.300 385 497.200 382.600 491.800H386.700Z" fill="#fff" />
      </g>
    </Svg>
  </Figure>
);

const ScrollTrack = styled.div`
  display: flex;
  flex-direction: column;
  align-items: center;
  width: 14px;
  height: 476px;
  margin-left: auto;
  padding: 5px 0 5px;
  background: #ececec;
`;

const Thumb = styled.div`
  width: 7px;
  height: 16px;
  margin-top: 14px;
  margin-bottom: auto;
  border-radius: 4px;
  background: #5f5f5f;
`;

/* ---------- status bar ---------- */

const StatusBar = styled.footer`
  display: flex;
  flex: none;
  align-items: center;
  height: 21px;
  padding-left: 9px;
  border-bottom: 1px solid #9a9a9a;
  background: #f5f5f5;
`;

const StatusCell = styled.div<{ $w: number; $ml?: number }>`
  display: flex;
  flex: none;
  align-items: center;
  width: ${(p) => p.$w}px;
  margin-left: ${(p) => p.$ml ?? 0}px;
`;

const ActiveView = styled.div`
  display: flex;
  flex: none;
  align-items: center;
  justify-content: center;
  width: 36px;
  height: 20px;
  margin-left: 10.5px;
  background: #e1e1e1;
`;

const Status = () => (
  <StatusBar>
    <StatusCell $w={79}><Label $size={9.5} $track={-0.15}>Page 14 of 576</Label></StatusCell>
    <StatusCell $w={71}><Label $size={9.5} $track={-0.15}>39503 words</Label></StatusCell>
    <Glyph w={13} h={12}>
      <path d="M6.500 2C5 .8 2.500 .8 .6 .8V10c2 0 4.500 0 5.900 1.200C7 10.800 7.500 10.500 8 10.300M6.500 2V11M6.500 2C8 .8 10.500 .8 12.400 .8V6M8 6.500l5 5M13 6.500l-5 5" />
    </Glyph>
    <StatusCell $w={70} $ml={15.5}><Label $size={9.3} $track={-0.13}>English (India)</Label></StatusCell>
    <Spacer />
    <Glyph w={13} h={13}>
      <path d="M3 .6H.6V3M.6 10v2.400H3M10 .6h2.400V3M12.400 10v2.400H10" />
      <path d="M3.500 2.500h4l2.300 2.300v5.700H3.500ZM7.300 2.500V5h2.500" strokeWidth="1.2" />
    </Glyph>
    <StatusCell $w={24} $ml={2.5}><Label $size={9.3} $track={-0.25}>Focus</Label></StatusCell>
    <Slot $w={14} $ml={20}>
      <Glyph w={13} h={11}>
        <path d="M6.500 1.500C5 .6 2.500 .6 .6 .6V9.600c2 0 4.500 0 5.900 1 1.400-1 4-1 5.900-1V.6c-2 0-4.400 0-5.900.9V10.500M2 3h3M2 5h3M2 7h3M8 3h3M8 5h3M8 7h3" strokeWidth=".9" />
      </Glyph>
    </Slot>
    <ActiveView>
      <Glyph w={11} h={13}><path d="M.6 .6h9.800v11.800H.6ZM2.500 3h6M2.500 5h6M2.500 7h6M2.500 9h6" strokeWidth=".9" /></Glyph>
    </ActiveView>
    <Slot $w={14} $ml={11}>
      <Glyph w={13} h={12}>
        <path d="M6 11.400H.6V.6h11V5M.6 2.800h11M2.500 5h4M2.500 7h3M2.500 9h2.500" strokeWidth=".9" />
        <circle cx="9" cy="8.3" r="3.5" fill="#fff" strokeWidth="1.3" />
        <path d="M5.500 8.300h7M9 4.800c-2 2.200-2 4.800 0 7M9 4.800c2 2.200 2 4.800 0 7" strokeWidth=".9" />
      </Glyph>
    </Slot>
    <Slot $w={8} $ml={15}><Glyph w={7} h={2}><path d="M0 1h7" stroke="#666" /></Glyph></Slot>
    <Slot $w={90} $ml={5}>
      <Glyph w={90} h={11}>
        <path d="M0 5.500h89" stroke="#555" /><path d="M45.500 3v5" stroke="#777" />
        <rect x="38.5" y=".5" width="4" height="10" fill="#555" stroke="none" />
      </Glyph>
    </Slot>
    <Slot $w={8} $ml={3}><Glyph w={6} h={6}><path d="M0 3h6M3 0v6" stroke="#666" /></Glyph></Slot>
    <StatusCell $w={30} $ml={10.5}><Label $size={9.5} $track={-0.1}>90%</Label></StatusCell>
  </StatusBar>
);

/* ---------- taskbar ---------- */

const Taskbar = styled.div`
  display: flex;
  flex: none;
  align-items: center;
  height: 42px;
  padding: 0 0 2px 16px;
  background: linear-gradient(90deg, #dcdcdc 0, #dcdcdc 300px, #d9e8d9 370px, #e6ecd0 430px, #efe8c3 470px, #f1ded2 520px, #efe0cd 580px, #e6e9bf 630px, #cdeebd 670px, #c5ecd3 720px, #cbe7dc 765px, #dadfde 810px, #dcdcdc 860px);
`;

const Weather = styled.div`
  display: flex;
  flex-direction: column;
  gap: 2.5px;
  width: 90px;
  margin: 1px 0 0 5px;
`;

const SearchPill = styled.div`
  display: flex;
  align-items: center;
  gap: 9px;
  width: 195px;
  height: 27px;
  margin-left: 13.5px;
  padding-left: 10px;
  border-radius: 14px;
  background: linear-gradient(90deg, #f4f4f4, #f6faf4 60%, #f9f8ec);
  box-shadow: 0 0.5px 1.5px rgba(0, 0, 0, 0.3);
`;

const AppSlot = styled.div<{ $active?: boolean; $ml?: number }>`
  display: flex;
  flex: none;
  flex-direction: column;
  align-items: center;
  justify-content: flex-end;
  gap: 2px;
  width: 34px;
  height: 34px;
  margin-left: ${(p) => p.$ml ?? 5.8}px;
  border-radius: 4px;
  background: ${(p) => (p.$active ? "rgba(255,255,255,.65)" : "transparent")};
`;

const Running = styled.div<{ $w?: number; $color?: string }>`
  width: ${(p) => p.$w ?? 0}px;
  height: 3px;
  border-radius: 2px;
  background: ${(p) => p.$color ?? "#6f7f78"};
`;

const ZoomDisc = styled.div`
  display: flex;
  align-items: center;
  justify-content: center;
  width: 22px;
  height: 22px;
  border-radius: 50%;
  background: #0b55e8;
`;

const Stack = styled.div<{ $w: number; $ml: number; $end?: boolean }>`
  display: flex;
  flex: none;
  flex-direction: column;
  align-items: ${(p) => (p.$end ? "flex-end" : "center")};
  gap: 2px;
  width: ${(p) => p.$w}px;
  margin: 2px 0 0 ${(p) => p.$ml}px;
`;

const Tray = styled.div`
  display: flex;
  align-items: center;
  margin-left: 63.5px;
`;

const Apps = () => (
  <>
    <AppSlot $ml={4}>
      <Glyph w={20} h={22}>
        <rect x="6" y="0" width="14" height="15" fill="#e8e8ea" stroke="none" />
        <path d="M1 5h6v9.500h10V21H1Z" fill="#2c2c2c" stroke="none" />
        <rect x="7" y="5" width="9.5" height="9.5" fill="#bdbdc2" stroke="none" />
      </Glyph>
      <Running />
    </AppSlot>
    <AppSlot $ml={7}>
      <Glyph w={22} h={21}>
        <g stroke="none">
          <path d="M0 2a2 2 0 0 1 2-1.500h5l2 2.500h11.500A1.500 1.500 0 0 1 22 4.500V18a2 2 0 0 1-2 2H2a2 2 0 0 1-2-2Z" fill="#fcd04c" />
          <path d="M0 2a2 2 0 0 1 2-1.500h5l2 2.500-2 2H0Z" fill="#d9981c" />
          <path d="M4 20v-4a2.500 2.500 0 0 1 2.500-2.500h9A2.500 2.500 0 0 1 18 16v4Z" fill="#1c74c4" />
        </g>
      </Glyph>
      <Running />
    </AppSlot>
    <AppSlot $ml={5.3}>
      <Glyph w={20} h={21}>
        <g stroke="none">
          <circle cx="10" cy="11" r="9.7" fill="#f0433f" />
          <path d="M2 5C0 9 0 14 2.500 17 8 21 17 20 19 14 21 8 17 2 13 0c1.500 3 2.500 4 2 7C13 4 8 5 7 6 5 5.500 3.500 4 2 5Z" fill="#ff8b2b" />
          <path d="M1 9C0 15 4 20.700 10 20.700c4 0 7-2 8.500-5C14 18.500 5 17 1 9Z" fill="#ee3d5c" />
          <path d="M13 0c1.500 3 5 5 4.500 10 0 3-1.500 5-3 6 4-.5 5-4 5-7C19 5 16 1.500 13 0Z" fill="#ffd43d" />
          <circle cx="10" cy="10.5" r="4" fill="#7a3fc4" />
          <path d="M4 8c2-1.500 4 0 6 .5-1.500 1-2 1.500-2 3.500-2 0-3.500-1-4-4Z" fill="#ff9a35" />
        </g>
      </Glyph>
      <Running />
    </AppSlot>
    <AppSlot $ml={6.3}>
      <Glyph w={22} h={21}>
        <path d="M1 11V1h11" stroke="#c2382d" strokeWidth="2" strokeDasharray="2 1.5" />
        <path d="M3 10.500H6" stroke="#c2382d" strokeWidth="2" />
        <path d="M12 4V17M5 9.500H17" stroke="#5d8496" strokeWidth="1.7" />
        <circle cx="18.500" cy="11.500" r="2.3" stroke="#5d8496" strokeWidth="1.4" /><circle cx="10.500" cy="18.300" r="2.3" stroke="#5d8496" strokeWidth="1.4" />
        <path d="M12 10l3 3" stroke="#5d8496" />
      </Glyph>
      <Running />
    </AppSlot>
    <AppSlot>
      <Glyph w={22} h={22}>
        <g stroke="none">
          <path d="M16 0l5.500 2.500v17L16 22Z" fill="#2ca5ee" />
          <path d="M16 0v6L3 16.500.5 14.500Z" fill="#1d87cf" />
          <path d="M16 22v-6L3 5.500.5 7.500Z" fill="#0f6fb5" />
        </g>
      </Glyph>
      <Running $w={5} />
    </AppSlot>
    <AppSlot $ml={5.5}>
      <Glyph w={18} h={22}>
        <g stroke="none">
          <rect x="0" y="2" width="18" height="18" rx="1" fill="#53c0dd" />
          <rect x="0" y="18.5" width="18" height="1.5" fill="#eee" />
          <rect x="0" y="20" width="18" height="2" fill="#9c4a34" />
        </g>
        <path d="M2.500 0v3M5.800 0v3M9 0v3M12.200 0v3M15.500 0v3" stroke="#226c88" strokeWidth="1.3" />
        <path d="M3.500 6.500h11M3.500 10h11M3.500 13.500h11" stroke="#17637f" strokeWidth="1.5" />
      </Glyph>
      <Running />
    </AppSlot>
    <AppSlot $active $ml={5.3}>
      <WordLogo size={22} />
      <Running $w={14} $color="#2f7f78" />
    </AppSlot>
    <AppSlot>
      <ZoomDisc><Label $size={6.5} $weight={600} $color="#fff" $track={-0.1}>zoom</Label></ZoomDisc>
      <Running $w={5} />
    </AppSlot>
  </>
);

const TrayIcons = () => (
  <Tray>
    <Slot $w={12}><Svg width="10" height="6"><path d="M.5 5.500L5 1l4.500 4.500" stroke="#222" strokeWidth="1.3" /></Svg></Slot>
    <Slot $w={18} $ml={13.5}>
      <Glyph w={15} h={12}>
        <path d="M3.500 10.500a3 3 0 0 1-.3-5.500C4 1.500 9.500 .5 11 4.300c3.500.2 4.500 4.500 1.500 6.200Z" fill="#aaa" stroke="#222" />
        <path d="M1.500 .5L13.500 11.500" stroke="#222" strokeWidth="1.3" />
      </Glyph>
    </Slot>
    <Slot $w={14} $ml={12.5}>
      <Glyph w={11} h={15}>
        <rect x="3.3" y=".6" width="4.4" height="8.5" rx="2.2" fill="#b5d3de" stroke="#456d7c" />
        <path d="M.8 6.500c0 6.500 9.400 6.500 9.400 0M5.500 11.300V14.500" stroke="#456d7c" strokeWidth="1.2" />
      </Glyph>
    </Slot>
    <Stack $w={24} $ml={15.7}><Label $size={10.2}>ENG</Label><Label $size={10.2}>IN</Label></Stack>
    <Slot $w={16} $ml={13.8}>
      <Glyph w={15} h={11}>
        <path d="M.5 4.500C4.500 0 10.500 0 14.500 4.500M3 7C5.500 4.200 9.500 4.200 12 7M5.300 9C6.500 7.600 8.500 7.600 9.700 9" stroke="#222" strokeWidth="1.2" />
        <circle cx="7.500" cy="10" r="1" fill="#222" stroke="none" />
      </Glyph>
    </Slot>
    <Slot $w={16} $ml={5.5}>
      <Glyph w={15} h={12}>
        <path d="M.6 4.200h2.200L6.500 1V11L2.800 7.800H.6ZM8.500 4c1 1.200 1 2.800 0 4M10.300 2.300c2 2.200 2 5.200 0 7.400M12.200 .8c2.800 3 2.800 7.400 0 10.400" stroke="#222" />
      </Glyph>
    </Slot>
    <Slot $w={16} $ml={6}>
      <Glyph w={15} h={13}>
        <path d="M4 3.500h9.500v3.500M2.500 6v5.500H9.500" stroke="#222" strokeWidth="1.2" />
        <path d="M4.500 5.500h7.500v4.500H4.500Z" fill="#333" stroke="none" />
        <path d="M1 1.500v3h4v-3M2 0v1.500M4 0v1.500M3 4.500v3" stroke="#222" strokeWidth="1.3" />
        <path d="M12 13L9 10c-.5-2 2-3 3-1 1-2 3.500-1 3 1Z" fill="#111" stroke="none" />
      </Glyph>
    </Slot>
    <Stack $w={60} $ml={4} $end>
      <Label $size={10.5} $track={-0.05}>8:14 PM</Label>
      <Label $size={10.5}>9/17/2024</Label>
    </Stack>
    <Slot $w={14} $ml={7}>
      <Glyph w={13} h={14}>
        <path d="M7 1C3.500 .8 2 3 2 5.500V8L.7 11H11.500L10.300 8.500M4.800 11.500c.5 2 2.500 2 3 0" stroke="#222" />
        <path d="M9.500 .8h2.700L9.500 4.300h2.700M4.800 4.800h2.700L4.800 8.300h2.700" stroke="#222" strokeWidth=".9" />
      </Glyph>
    </Slot>
    <Slot $w={24} $ml={13}>
      <Svg width="22" height="22" viewBox="0 0 22 22">
        <g stroke="none">
          <path d="M3 4C4 1 6 0 8 0h6c2 0 2.500 2 3 4l-5 2-4 9H3C0 15 0 12 1 9Z" fill="#3b8fe0" />
          <path d="M3 4C4 1 6 0 8 0h4C9 2 8 6 7 10L2 13C0 12 .5 10 1 9Z" fill="#3cbcb0" />
          <path d="M12 5h6c3 0 3.500 2 3 5l-2 6c-1 3-3 4-6 4H8c2-1 2.500-5 4-15Z" fill="#b968d8" />
          <path d="M14 9l7 1-2 6H11Z" fill="#f0709a" />
          <rect x="5" y="13" width="16" height="8" rx="1.5" fill="#f5b32c" />
        </g>
        <text x="13" y="19.8" textAnchor="middle" fontSize="6.5" fontWeight="700" fill="#5a2a10" stroke="none">PRE</text>
      </Svg>
    </Slot>
  </Tray>
);

const TaskbarRow = () => (
  <Taskbar>
    <Slot $w={24}>
      <Svg width="24" height="25" viewBox="0 0 24 25">
        <g stroke="none">
          <path d="M18.500 10a9.500 9.500 0 1 1-17 7C6 19 13 17 13 10Z" fill="#eb962b" />
          <path d="M2 13a3.500 3.500 0 0 1 1-6.500C4 3 10 3 11 7l2 6Z" fill="#9dbdf0" />
          <circle cx="17" cy="5.500" r="7" fill="#bf2a22" />
        </g>
        <text x="17" y="9" textAnchor="middle" fontSize="9.500" fill="#fff" stroke="none">1</text>
      </Svg>
    </Slot>
    <Weather>
      <Label $size={10.2}>89°F</Label>
      <Label $size={10.3} $color="#5a5a5a">Mostly clear</Label>
    </Weather>
    <Slot $w={21} $ml={83.5}>
      <Svg width="21" height="21" viewBox="0 0 21 21">
        <defs>
          <linearGradient id="win" x1="0" y1="0" x2="1" y2="1">
            <stop offset="0" stopColor="#3cb4ec" /><stop offset="1" stopColor="#0a6fc9" />
          </linearGradient>
        </defs>
        <path d="M0 0h10v10H0ZM11 0h10v10H11ZM0 11h10v10H0ZM11 11h10v10H11Z" fill="url(#win)" stroke="none" />
      </Svg>
    </Slot>
    <SearchPill>
      <Glyph w={13} h={13}>
        <circle cx="5.3" cy="5.3" r="4.5" stroke="#111" strokeWidth="1.5" />
        <path d="M8.500 8.500l4 4" stroke="#111" strokeWidth="1.7" />
      </Glyph>
      <Label $size={11.6} $color="#5c5c5c">Search</Label>
    </SearchPill>
    <Apps />
    <TrayIcons />
  </Taskbar>
);

export default function App() {
  return (
    <Screen>
      <Global />
      <Desktop>
        <TopHeader />
        <Ribbon>
          <ClipboardGroup />
          <FontGroup />
          <ParagraphGroup />
          <StylesGroup />
          <EditingGroup />
          <AddInsGroup />
          <CollapseCorner><Chevron w={8} weight={1.4} /></CollapseCorner>
        </Ribbon>
        <HorizontalRuler />
        <Workspace>
          <VerticalRuler />
          <Page>
            <Heading>
              <Marked $w={669}><Stretch $x={1.216}>Introduction of Matrices</Stretch></Marked>
              <Marked $w={333}><Stretch $x={1.235}>and Tensors</Stretch></Marked>
            </Heading>
            <MatrixFigure />
          </Page>
          <ScrollTrack>
            <Glyph w={8} h={6}><path d="M0 6L4 0l4 6Z" fill="#555" stroke="none" /></Glyph>
            <Thumb />
            <Glyph w={8} h={6}><path d="M0 0L4 6l4-6Z" fill="#555" stroke="none" /></Glyph>
          </ScrollTrack>
        </Workspace>
        <Status />
        <TaskbarRow />
      </Desktop>
    </Screen>
  );
}
